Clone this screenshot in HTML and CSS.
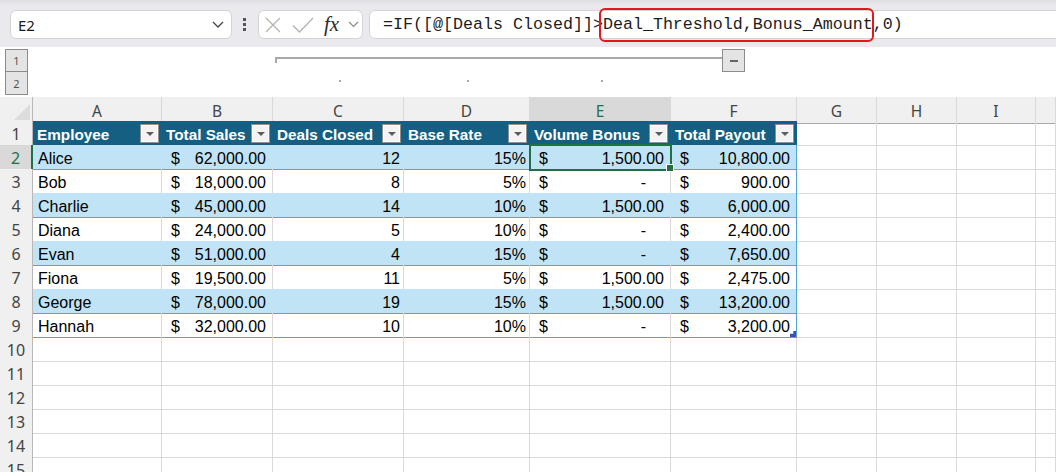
FILE: index.html
```html
<!DOCTYPE html>
<html>
<head>
<meta charset="utf-8">
<link rel="stylesheet" href="styles.css">
</head>
<body>
<div class="topbar">
  <div class="namebox">
    <span>E2</span>
    <svg width="12" height="7" viewBox="0 0 12 7"><path d="M1 1l5 5 5-5" fill="none" stroke="#444" stroke-width="1.3"/></svg>
  </div>
  <div class="grip"><i></i><i></i><i></i></div>
  <div class="tools">
    <svg class="ico-x" width="16" height="16" viewBox="0 0 16 16"><path d="M1 1L15 15M15 1L1 15" stroke="#b3b3b3" stroke-width="1.3" fill="none"/></svg>
    <svg class="ico-ok" width="22" height="16" viewBox="0 0 22 16"><path d="M1 8.5L7.5 15L21 1" stroke="#b3b3b3" stroke-width="1.3" fill="none"/></svg>
    <span class="fx">fx</span>
    <svg class="ico-dd" width="11" height="7" viewBox="0 0 11 7"><path d="M1 1l4.5 4.5L10 1" fill="none" stroke="#8a8a8a" stroke-width="1.2"/></svg>
  </div>
  <div class="formula">
    <span>=IF([@[Deals Closed]]&gt;</span><span class="hl">Deal_Threshold,Bonus_Amount</span><span>,0)</span>
  </div>
</div>

<div class="outline">
  <div class="levels">
    <div class="lvl">1</div>
    <div class="lvl">2</div>
  </div>
  <div class="canvas">
    <div class="ol-bar"></div>
    <div class="ol-tick"></div>
    <div class="ol-btn"><i></i></div>
    <div class="ol-dot d1"></div>
    <div class="ol-dot d2"></div>
    <div class="ol-dot d3"></div>
  </div>
</div>

<div class="sheet">
  <div class="r colhead">
    <div class="corner"><svg width="16" height="16" viewBox="0 0 16 16"><path d="M16 0V16H0Z" fill="#dcdcdc"/></svg></div>
    <div class="ch">A</div><div class="ch">B</div><div class="ch">C</div><div class="ch">D</div>
    <div class="ch on">E</div><div class="ch">F</div><div class="ch">G</div><div class="ch">H</div>
    <div class="ch">I</div><div class="ch"></div>
  </div>

  <div class="r">
    <div class="rh">1</div>
    <div class="c th"><span>Employee</span><i class="dd"></i></div>
    <div class="c th"><span>Total Sales</span><i class="dd"></i></div>
    <div class="c th"><span>Deals Closed</span><i class="dd"></i></div>
    <div class="c th"><span>Base Rate</span><i class="dd"></i></div>
    <div class="c th"><span>Volume Bonus</span><i class="dd"></i></div>
    <div class="c th"><span>Total Payout</span><i class="dd"></i></div>
    <div class="c"></div><div class="c"></div><div class="c"></div><div class="c"></div>
  </div>

  <div class="r band">
    <div class="rh on">2</div>
    <div class="c t">Alice</div>
    <div class="c t acc"><span>$</span><span>62,000.00</span></div>
    <div class="c t num">12</div>
    <div class="c t num">15%</div>
    <div class="c t acc sel"><span>$</span><span>1,500.00</span></div>
    <div class="c t acc last"><span>$</span><span>10,800.00</span></div>
    <div class="c"></div><div class="c"></div><div class="c"></div><div class="c"></div>
  </div>

  <div class="r">
    <div class="rh">3</div>
    <div class="c t">Bob</div>
    <div class="c t acc"><span>$</span><span>18,000.00</span></div>
    <div class="c t num">8</div>
    <div class="c t num">5%</div>
    <div class="c t acc"><span>$</span><span class="dash">-</span></div>
    <div class="c t acc last"><span>$</span><span>900.00</span></div>
    <div class="c"></div><div class="c"></div><div class="c"></div><div class="c"></div>
  </div>

  <div class="r band">
    <div class="rh">4</div>
    <div class="c t">Charlie</div>
    <div class="c t acc"><span>$</span><span>45,000.00</span></div>
    <div class="c t num">14</div>
    <div class="c t num">10%</div>
    <div class="c t acc"><span>$</span><span>1,500.00</span></div>
    <div class="c t acc last"><span>$</span><span>6,000.00</span></div>
    <div class="c"></div><div class="c"></div><div class="c"></div><div class="c"></div>
  </div>

  <div class="r">
    <div class="rh">5</div>
    <div class="c t">Diana</div>
    <div class="c t acc"><span>$</span><span>24,000.00</span></div>
    <div class="c t num">5</div>
    <div class="c t num">10%</div>
    <div class="c t acc"><span>$</span><span class="dash">-</span></div>
    <div class="c t acc last"><span>$</span><span>2,400.00</span></div>
    <div class="c"></div><div class="c"></div><div class="c"></div><div class="c"></div>
  </div>

  <div class="r band">
    <div class="rh">6</div>
    <div class="c t">Evan</div>
    <div class="c t acc"><span>$</span><span>51,000.00</span></div>
    <div class="c t num">4</div>
    <div class="c t num">15%</div>
    <div class="c t acc"><span>$</span><span class="dash">-</span></div>
    <div class="c t acc last"><span>$</span><span>7,650.00</span></div>
    <div class="c"></div><div class="c"></div><div class="c"></div><div class="c"></div>
  </div>

  <div class="r">
    <div class="rh">7</div>
    <div class="c t">Fiona</div>
    <div class="c t acc"><span>$</span><span>19,500.00</span></div>
    <div class="c t num">11</div>
    <div class="c t num">5%</div>
    <div class="c t acc"><span>$</span><span>1,500.00</span></div>
    <div class="c t acc last"><span>$</span><span>2,475.00</span></div>
    <div class="c"></div><div class="c"></div><div class="c"></div><div class="c"></div>
  </div>

  <div class="r band">
    <div class="rh">8</div>
    <div class="c t">George</div>
    <div class="c t acc"><span>$</span><span>78,000.00</span></div>
    <div class="c t num">19</div>
    <div class="c t num">15%</div>
    <div class="c t acc"><span>$</span><span>1,500.00</span></div>
    <div class="c t acc last"><span>$</span><span>13,200.00</span></div>
    <div class="c"></div><div class="c"></div><div class="c"></div><div class="c"></div>
  </div>

  <div class="r">
    <div class="rh">9</div>
    <div class="c t">Hannah</div>
    <div class="c t acc"><span>$</span><span>32,000.00</span></div>
    <div class="c t num">10</div>
    <div class="c t num">10%</div>
    <div class="c t acc"><span>$</span><span class="dash">-</span></div>
    <div class="c t acc last resize"><span>$</span><span>3,200.00</span></div>
    <div class="c"></div><div class="c"></div><div class="c"></div><div class="c"></div>
  </div>

  <div class="r"><div class="rh">10</div><div class="c"></div><div class="c"></div><div class="c"></div><div class="c"></div><div class="c"></div><div class="c"></div><div class="c"></div><div class="c"></div><div class="c"></div><div class="c"></div></div>
  <div class="r"><div class="rh">11</div><div class="c"></div><div class="c"></div><div class="c"></div><div class="c"></div><div class="c"></div><div class="c"></div><div class="c"></div><div class="c"></div><div class="c"></div><div class="c"></div></div>
  <div class="r"><div class="rh">12</div><div class="c"></div><div class="c"></div><div class="c"></div><div class="c"></div><div class="c"></div><div class="c"></div><div class="c"></div><div class="c"></div><div class="c"></div><div class="c"></div></div>
  <div class="r"><div class="rh">13</div><div class="c"></div><div class="c"></div><div class="c"></div><div class="c"></div><div class="c"></div><div class="c"></div><div class="c"></div><div class="c"></div><div class="c"></div><div class="c"></div></div>
  <div class="r"><div class="rh">14</div><div class="c"></div><div class="c"></div><div class="c"></div><div class="c"></div><div class="c"></div><div class="c"></div><div class="c"></div><div class="c"></div><div class="c"></div><div class="c"></div></div>
  <div class="r"><div class="rh">15</div><div class="c"></div><div class="c"></div><div class="c"></div><div class="c"></div><div class="c"></div><div class="c"></div><div class="c"></div><div class="c"></div><div class="c"></div><div class="c"></div></div>
</div>
</body>
</html>
```

FILE: styles.css
```css
* { box-sizing: border-box; }
html, body { margin: 0; padding: 0; }
body {
  width: 1056px;
  height: 472px;
  overflow: hidden;
  background: #fff;
  font-family: "Liberation Sans", Arial, sans-serif;
  color: #000;
}

/* ---------- formula bar ---------- */
.topbar {
  height: 47px;
  background: linear-gradient(#dcdce1 0, #e9e9ee 5px, #e9e9ee 100%);
  display: flex;
  align-items: flex-start;
  padding: 10px 0 0 10px;
  overflow: hidden;
}
.namebox {
  width: 222px;
  height: 29px;
  background: #fff;
  border: 1px solid #d3d3d8;
  border-radius: 6px;
  display: flex;
  align-items: center;
  justify-content: space-between;
  padding: 0 7px 0 7px;
  font-family: "Noto Sans", sans-serif;
  font-size: 15px;
  color: #1a1a1a;
}
.grip {
  margin-left: 11px;
  margin-top: 8px;
  width: 4px;
  display: flex;
  flex-direction: column;
  gap: 2px;
}
.grip i { display: block; width: 3px; height: 3px; background: #555; }
.tools {
  margin-left: 11px;
  width: 105px;
  height: 29px;
  background: #fff;
  border: 1px solid #d3d3d8;
  border-radius: 6px;
  display: flex;
  align-items: center;
}
.ico-x { margin-left: 6px; }
.ico-ok { margin-left: 11px; }
.fx {
  margin-left: 10px;
  width: 19px;
  font-family: "Liberation Serif", serif;
  font-style: italic;
  font-size: 21px;
  line-height: 20px;
  color: #2b2b2b;
  margin-top: -2px;
}
.ico-dd { margin-left: 5px; }
.formula {
  margin-left: 6px;
  flex: 1;
  margin-right: -12px;
  height: 29px;
  background: #fff;
  border: 1px solid #d3d3d8;
  border-radius: 6px;
  display: flex;
  align-items: stretch;
  padding-left: 13px;
  font-family: "Liberation Mono", monospace;
  font-size: 16.67px;
  color: #1d1d1d;
  white-space: pre;
}
.formula span { display: flex; align-items: center; }
.hl { position: relative; }
.hl::after {
  content: "";
  position: absolute;
  left: -4px;
  right: -1px;
  top: -3px;
  bottom: -4px;
  border: 2px solid #e5161e;
  border-radius: 6px;
}

/* ---------- outline strip ---------- */
.outline {
  height: 50px;
  display: flex;
  background: #fff;
}
.levels {
  margin: 2px 0 0 5px;
  width: 23px;
  display: flex;
  flex-direction: column;
}
.lvl {
  height: 23px;
  background: #e4e4e4;
  border: 1px solid #8c8c8c;
  display: flex;
  align-items: center;
  justify-content: center;
  font-family: "Noto Sans", sans-serif;
  font-size: 11px;
  color: #555;
}
.lvl + .lvl { border-top: none; height: 23px; }
.canvas { position: relative; flex: 1; }
.ol-bar { position: absolute; left: 247px; top: 10px; width: 447px; height: 2px; background: #a9a9a9; }
.ol-tick { position: absolute; left: 247px; top: 10px; width: 2px; height: 6px; background: #a9a9a9; }
.ol-btn {
  position: absolute; left: 694px; top: 2px; width: 23px; height: 23px;
  background: #e4e4e4; border: 1px solid #8c8c8c;
  display: flex; align-items: center; justify-content: center;
}
.ol-btn i { display: block; width: 8px; height: 2px; background: #666; }
.ol-dot { position: absolute; top: 33px; width: 2px; height: 2px; background: #aaa; }
.d1 { left: 311px; }
.d2 { left: 439px; }
.d3 { left: 573px; }

/* ---------- sheet ---------- */
.r {
  display: grid;
  grid-template-columns: 33px 129px 111px 131px 126px 141px 126px 80px 80px 79px 1fr;
  height: 24px;
}
.corner {
  background: #f0f0f0;
  border-right: 1px solid #b8b8b8;
  border-bottom: 1px solid #a8a8a8;
  display: flex;
  align-items: flex-end;
  justify-content: flex-end;
  padding: 0 2px 3px 0;
}
.ch {
  background: #f0f0f0;
  border-right: 1px solid #d9d9d9;
  border-bottom: 1px solid #a8a8a8;
  display: flex;
  align-items: center;
  justify-content: center;
  padding-top: 2px;
  font-family: "Noto Sans", sans-serif;
  font-size: 15.5px;
  color: #444;
}
.ch.on {
  background: #d9d9d9;
  color: #1e7145;
  border-bottom: 2px solid #1e7145;
  padding-top: 3px;
}
.rh {
  background: #f0f0f0;
  border-right: 1px solid #b8b8b8;
  border-bottom: 1px solid #dadada;
  display: flex;
  align-items: center;
  justify-content: center;
  padding-top: 2px;
  font-family: "Noto Sans", sans-serif;
  font-size: 16px;
  color: #444;
}
.rh.on {
  background: #d9d9d9;
  color: #1e7145;
  border-right: 2px solid #1e7145;
}
.c {
  border-right: 1px solid #dadada;
  border-bottom: 1px solid #dadada;
  display: flex;
  align-items: center;
  padding: 4px 4px 0 5px;
  font-size: 16px;
  white-space: nowrap;
  overflow: hidden;
}
.th {
  background: #156082;
  border-right-color: #156082;
  border-bottom-color: #156082;
  color: #fff;
  font-weight: bold;
  font-size: 15.3px;
  justify-content: space-between;
  padding: 0 2px 0 4px;
}
.th span { padding-top: 3px; }
.dd {
  flex: none;
  width: 19px;
  height: 19px;
  background: #f3f3f3;
  border: 1px solid #8f8f8f;
  box-shadow: inset 0 0 0 1px #fff;
  display: flex;
  align-items: center;
  justify-content: center;
}
.dd::before {
  content: "";
  width: 0;
  height: 0;
  border-left: 4px solid transparent;
  border-right: 4px solid transparent;
  border-top: 4px solid #5c5c5c;
  margin-top: 1px;
}
.t { border-bottom-color: #4ca6da; }
.band .t { background: #c0e4f5; border-right-color: #c0e4f5; }
.t.last { border-right-color: #4ca6da; }
.num { justify-content: flex-end; padding-right: 3px; }
.acc { justify-content: space-between; padding-left: 9px; padding-right: 6px; }
.dash { margin-right: 18px; }
.sel { position: relative; overflow: visible; z-index: 2; }
.sel::before {
  content: "";
  position: absolute;
  left: -1px;
  top: -1px;
  right: -2px;
  bottom: -2px;
  border: 2px solid #1e7145;
}
.sel::after {
  content: "";
  position: absolute;
  right: -3px;
  bottom: -2px;
  width: 6px;
  height: 6px;
  background: #1e7145;
  outline: 1px solid #fff;
}
.resize { position: relative; }
.resize::after {
  content: "";
  position: absolute;
  right: 0;
  bottom: 0;
  width: 6px;
  height: 6px;
  background: #3b4fb8;
  clip-path: polygon(100% 0, 100% 100%, 0 100%, 0 45%, 55% 45%, 55% 0);
}
```
